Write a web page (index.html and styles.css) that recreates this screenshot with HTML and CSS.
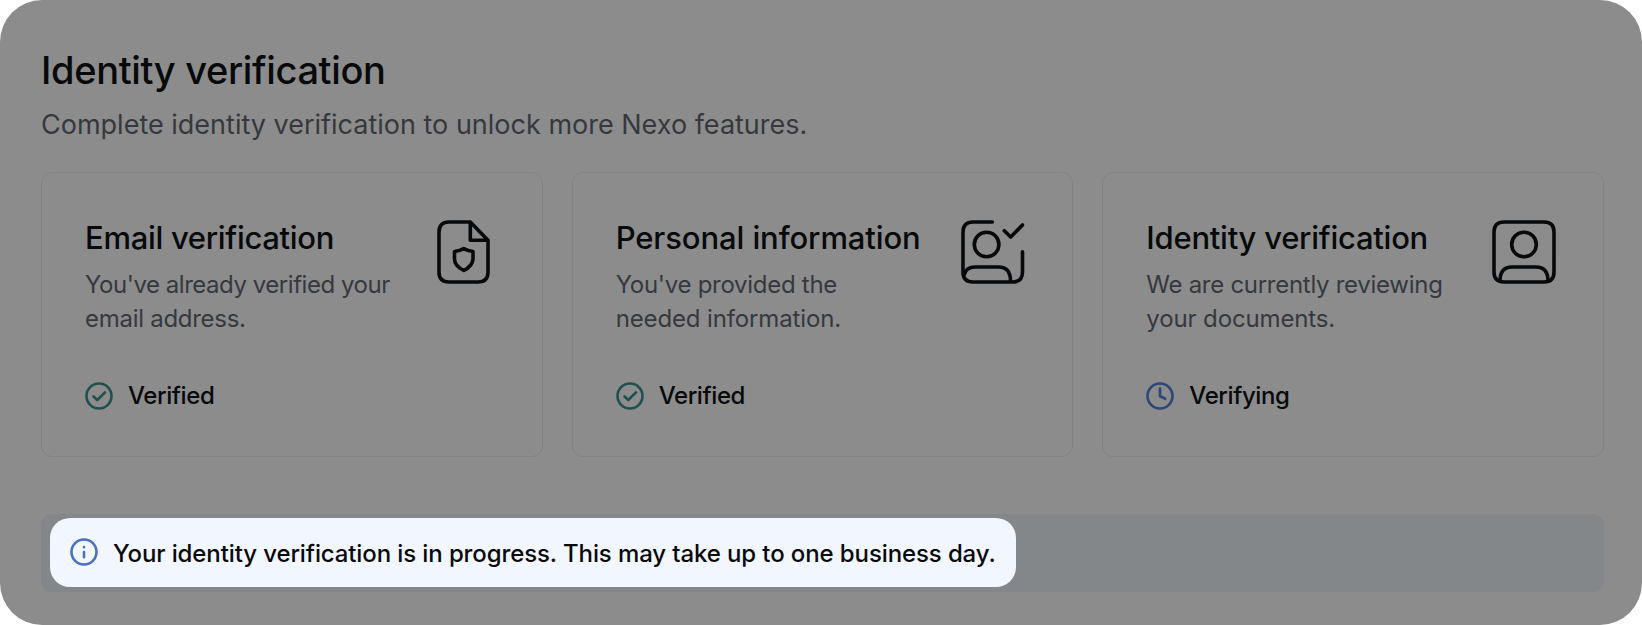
FILE: index.html
```html
<!DOCTYPE html>
<html lang="en">
<head>
<meta charset="utf-8">
<title>Identity verification</title>
<link rel="stylesheet" href="styles.css">
</head>
<body>
<main class="panel">
  <h1 class="title">Identity verification</h1>
  <p class="subtitle">Complete identity verification to unlock more Nexo features.</p>
  <section class="cards">
    <article class="card">
      <div class="card-head">
        <div>
          <h2 class="card-title email">Email verification</h2>
          <p class="card-text"><span class="snug">You've already verified your</span><br>email address.</p>
        </div>
        <svg class="card-icon file-icon" viewBox="0 0 68 68" fill="none" stroke="currentColor" stroke-width="3.6" stroke-linejoin="round" stroke-linecap="round">
          <path d="M35.300 4H14Q4 4 4 14V54Q4 64 14 64H43Q53 64 53 54V22.300L35.300 4V22.300H53"/>
          <path d="M28.800 30.600Q33 33 38 33.500V41Q37.500 48 28.800 52.500Q19.500 48 19.500 41V33.500Q25 33 28.800 30.600Z"/>
        </svg>
      </div>
      <div class="status"><svg class="status-icon green" viewBox="0 0 28 28"><circle cx="14" cy="14" r="12.500"/><path d="M8.500 14.500L12.300 18L20 10.300"/></svg><span>Verified</span></div>
    </article>
    <article class="card">
      <div class="card-head">
        <div>
          <h2 class="card-title personal">Personal information</h2>
          <p class="card-text">You've provided the<br><span class="loose">needed information.</span></p>
        </div>
        <svg class="card-icon" viewBox="0 0 68 68" fill="none" stroke="currentColor" stroke-width="3.6" stroke-linejoin="round" stroke-linecap="round">
          <path d="M33.300 4H14Q4 4 4 14V54Q4 64 14 64H53.500Q63.500 64 63.500 54V33.700"/>
          <circle cx="27.600" cy="26.500" r="12.300"/>
          <path d="M5 57Q7 49 16 49H39.500Q51.500 49 51.500 63M45.300 12.700L51.700 19L63.500 7"/>
        </svg>
      </div>
      <div class="status"><svg class="status-icon green" viewBox="0 0 28 28"><circle cx="14" cy="14" r="12.500"/><path d="M8.500 14.500L12.300 18L20 10.300"/></svg><span>Verified</span></div>
    </article>
    <article class="card">
      <div class="card-head">
        <div>
          <h2 class="card-title identity">Identity verification</h2>
          <p class="card-text">We are currently reviewing<br><span class="loose">your documents.</span></p>
        </div>
        <svg class="card-icon" viewBox="0 0 68 68" fill="none" stroke="currentColor" stroke-width="3.6" stroke-linejoin="round" stroke-linecap="round">
          <path d="M14 4H54Q64 4 64 14V54Q64 64 54 64H14Q4 64 4 54V14Q4 4 14 4Z"/>
          <circle cx="34" cy="26.500" r="12.300"/>
          <path d="M10 63Q10 49 22 49H46Q58 49 58 63"/>
        </svg>
      </div>
      <div class="status"><svg class="status-icon blue" viewBox="0 0 28 28"><circle cx="14" cy="14" r="12.500"/><path d="M14 6.500V14.300L19.300 16.800"/></svg><span>Verifying</span></div>
    </article>
  </section>
  <div class="banner">
    <div class="notice">
      <svg class="status-icon info" viewBox="0 0 28 28"><circle cx="14" cy="14" r="12.500"/><path d="M14 14V19.300M14 9.100V9.200"/></svg>
      <span>Your identity verification is in progress. This may take up to one business day.</span>
    </div>
  </div>
</main>
</body>
</html>
```
FILE: styles.css
```css
* { box-sizing: border-box; }
body { margin: 0; background: #fff; font-family: Inter, "Liberation Sans", sans-serif; color: #07090b; }
h1, h2, p { margin: 0; }
.panel { width: 1642px; height: 625px; padding: 47px 38px 0 41px; background: #8c8c8c; border-radius: 42px; overflow: hidden; }
.title { font-size: 38px; line-height: 46px; font-weight: 500; letter-spacing: -0.34px; white-space: nowrap; }
.subtitle { margin-top: 14px; font-size: 27px; line-height: 36px; color: #35393f; letter-spacing: 0; white-space: nowrap; }
.cards { display: grid; grid-template-columns: repeat(3, 1fr); gap: 29px; margin-top: 29px; }
.card { height: 285px; border: 1px solid #808284; border-radius: 11px; padding: 44px 45px 0 43px; white-space: nowrap; }
.card-head { display: flex; justify-content: space-between; height: 164px; }
.card-head > div { width: 310px; }
.card-title { font-size: 31px; line-height: 42px; font-weight: 500; }
.email { letter-spacing: -0.3px; }
.personal { letter-spacing: -0.1px; }
.identity { letter-spacing: -0.25px; }
.card-text { margin-top: 9px; font-size: 24px; line-height: 34px; color: #35393f; letter-spacing: -0.28px; }
.snug { letter-spacing: -0.46px; }
.loose { letter-spacing: -0.13px; }
.card-icon { width: 68px; height: 68px; margin: 1px 0 0; flex: none; }
.file-icon { margin-right: -6px; }
.status { display: flex; align-items: center; gap: 15px; height: 30px; font-size: 24px; line-height: 30px; font-weight: 500; letter-spacing: -0.4px; }
.status-icon { width: 28px; height: 28px; flex: none; fill: none; stroke: currentColor; stroke-width: 2.6; stroke-linecap: round; stroke-linejoin: round; }
.green { color: #1f4f50; }
.blue { color: #2e4577; }
.info { color: #4a70c2; margin-top: -2px; }
.banner { margin-top: 57px; height: 78px; padding: 4px 9px; border-radius: 11px; background: #838789; }
.notice { display: flex; align-items: center; gap: 15px; width: 966px; height: 69px; padding: 1px 0 0 20px; border-radius: 20px; background: #f2f6ff; font-size: 24px; font-weight: 500; letter-spacing: -0.11px; white-space: nowrap; }
```
